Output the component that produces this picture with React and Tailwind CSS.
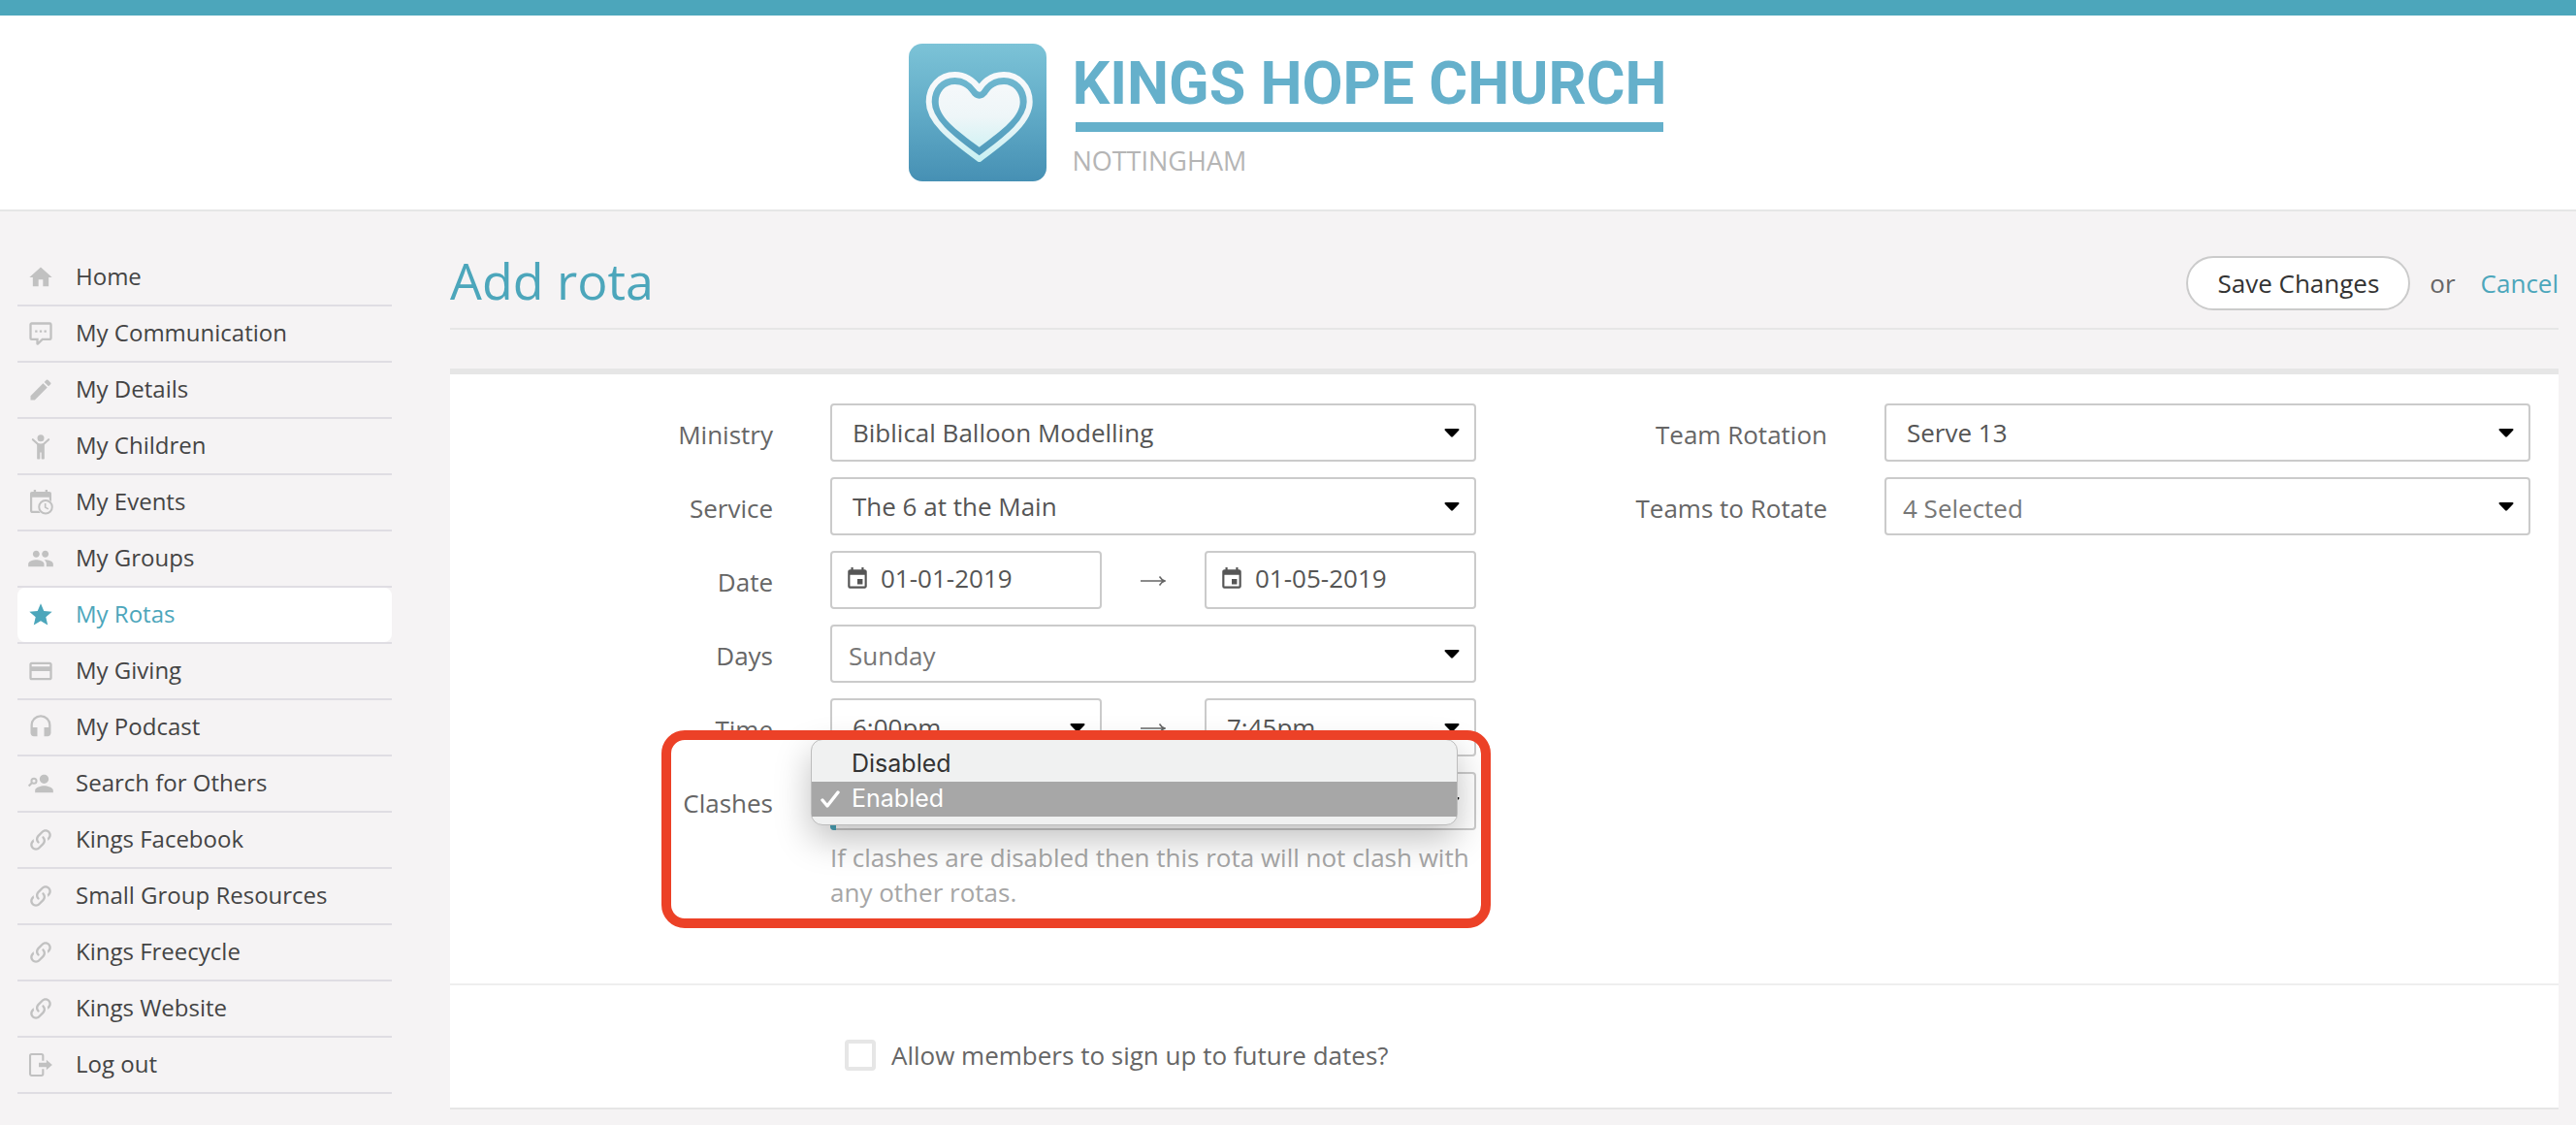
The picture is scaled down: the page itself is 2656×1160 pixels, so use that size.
import { MdHome, MdEdit, MdPeople, MdStar, MdCreditCard, MdHeadset, MdEvent } from 'react-icons/md';

function Glyph({ children }) {
  return (
    <svg viewBox="0 0 24 24" width="28" height="28" fill="currentColor" aria-hidden="true">
      {children}
    </svg>
  );
}

const CommentIcon = () => (
  <Glyph>
    <path d="M9,22A1,1 0 0,1 8,21V18H4A2,2 0 0,1 2,16V4C2,2.89 2.9,2 4,2H20A2,2 0 0,1 22,4V16A2,2 0 0,1 20,18H13.9L10.2,21.71C10,21.9 9.75,22 9.5,22H9M10,16V19.08L13.08,16H20V4H4V16H10M17,11H15V9H17V11M13,11H11V9H13V11M9,11H7V9H9V11Z" />
  </Glyph>
);

const ChildIcon = () => (
  <Glyph>
    <circle cx="12" cy="5" r="3" />
    <path d="M5 6.2l5 4.6M19 6.2l-5 4.6" stroke="currentColor" strokeWidth="1.8" strokeLinecap="round" />
    <path d="M8.7 9.2c2 .8 4.600 .8 6.600 0V23a.6 .6 0 0 1-.6 .6h-1.500a.6 .6 0 0 1-.6-.6v-5.500h-1.200V23a.6 .6 0 0 1-.6 .6H9.300a.6 .6 0 0 1-.6-.6z" />
  </Glyph>
);

const CalendarClockIcon = () => (
  <Glyph>
    <rect x="3.500" y="3.500" width="17" height="17" rx="1.500" fill="none" stroke="currentColor" strokeWidth="1.900" />
    <path d="M3 3h18v4.500H3zM5.800 .9h2v3h-2zM16 .9h2v3h-2z" />
    <circle cx="16.300" cy="16.100" r="7" className="text-[#f5f3f4]" />
    <circle cx="16.300" cy="16.100" r="5.800" fill="none" stroke="currentColor" strokeWidth="1.700" />
    <path d="M16 12.800v3.600l2.700 1.500" fill="none" stroke="currentColor" strokeWidth="1.400" />
  </Glyph>
);

const PersonSearchIcon = () => (
  <Glyph>
    <path d="M15 12c2.210 0 4-1.790 4-4s-1.790-4-4-4-4 1.790-4 4 1.790 4 4 4zm0 2c-2.670 0-8 1.340-8 4v2h16v-2c0-2.660-5.330-4-8-4z" />
    <circle cx="6" cy="9.600" r="2.200" fill="none" stroke="currentColor" strokeWidth="1.700" />
    <path d="M4.400 11.200l-3 3" stroke="currentColor" strokeWidth="1.900" />
  </Glyph>
);

const LinkIcon = () => (
  <Glyph>
    <path d="M10.59,13.41C11,13.8 11,14.44 10.59,14.83C10.2,15.22 9.56,15.22 9.17,14.83C7.22,12.88 7.22,9.71 9.17,7.76V7.76L12.71,4.22C14.66,2.27 17.83,2.27 19.78,4.22C21.73,6.17 21.73,9.34 19.78,11.29L18.29,12.78C18.3,11.96 18.17,11.14 17.89,10.36L18.36,9.88C19.54,8.71 19.54,6.81 18.36,5.64C17.19,4.46 15.29,4.46 14.12,5.64L10.59,9.17C9.41,10.34 9.41,12.24 10.59,13.41M13.41,9.17C13.8,8.78 14.44,8.78 14.83,9.17C16.78,11.12 16.78,14.29 14.83,16.24V16.24L11.29,19.78C9.34,21.73 6.17,21.73 4.22,19.78C2.27,17.83 2.27,14.66 4.22,12.71L5.71,11.22C5.7,12.04 5.83,12.86 6.11,13.65L5.64,14.12C4.46,15.29 4.46,17.19 5.64,18.36C6.81,19.54 8.71,19.54 9.88,18.36L13.41,14.83C14.59,13.66 14.59,11.76 13.41,10.59C13,10.2 13,9.56 13.41,9.17Z" />
  </Glyph>
);

const LogoutIcon = () => (
  <Glyph>
    <path d="M14 8.300V4a1.400 1.400 0 0 0-1.400-1.400H4A1.400 1.400 0 0 0 2.600 4v16A1.400 1.400 0 0 0 4 21.400h8.600A1.400 1.400 0 0 0 14 20v-4.300" fill="none" stroke="currentColor" strokeWidth="1.800" />
    <path d="M10.300 10.100H17V7.400L22.200 12 17 16.600v-2.700h-6.700z" />
  </Glyph>
);

const NAV = [
  ['Home', MdHome],
  ['My Communication', CommentIcon],
  ['My Details', MdEdit],
  ['My Children', ChildIcon],
  ['My Events', CalendarClockIcon],
  ['My Groups', MdPeople],
  ['My Rotas', MdStar],
  ['My Giving', MdCreditCard],
  ['My Podcast', MdHeadset],
  ['Search for Others', PersonSearchIcon],
  ['Kings Facebook', LinkIcon],
  ['Small Group Resources', LinkIcon],
  ['Kings Freecycle', LinkIcon],
  ['Kings Website', LinkIcon],
  ['Log out', LogoutIcon],
];

function Logo() {
  return (
    <svg viewBox="0 0 142 142" className="size-[142px] shrink-0" aria-hidden="true">
      <defs>
        <linearGradient id="tile" x1="0" y1="0" x2="0" y2="1">
          <stop offset="0" stopColor="#7cc3d7" />
          <stop offset="0.5" stopColor="#61abc7" />
          <stop offset="1" stopColor="#4690b4" />
        </linearGradient>
        <linearGradient id="heart" gradientUnits="userSpaceOnUse" x1="0" y1="29" x2="0" y2="122">
          <stop offset="0" stopColor="#f8f9fb" />
          <stop offset="0.5" stopColor="#eef6f8" />
          <stop offset="1" stopColor="#c6f0f2" />
        </linearGradient>
      </defs>
      <rect width="142" height="142" rx="14" fill="url(#tile)" />
      <path
        d="M72.700 46.500C66 37 57 32 47.500 32C32 32 20.700 44 20.700 60C20.700 79 41 96 72.700 119C104 96 124.700 79 124.700 60C124.700 44 113 32 98 32C88 32 79 37 72.700 46.500Z"
        fill="none"
        stroke="url(#heart)"
        strokeWidth="6"
        strokeLinejoin="round"
      />
      <path
        d="M64 51C60 45 54 42 47.500 42C37.500 42 30.700 50 30.700 60C30.700 75 47 88 72.700 106.700C98 88 114.700 75 114.700 60C114.700 50 107.500 42 98 42C91 42 85.500 45 81.500 51C77 58.500 68.500 58.500 64 51Z"
        fill="url(#heart)"
      />
    </svg>
  );
}

function Caret() {
  return (
    <svg viewBox="0 0 16 9" width="16" height="9" className="pointer-events-none absolute top-[26px] right-[17px]" aria-hidden="true">
      <path d="M1.500 0h13a1 1 0 0 1 .7 1.700L8.900 8.300a1.300 1.300 0 0 1-1.800 0L.8 1.700A1 1 0 0 1 1.500 0z" fill="#000" />
    </svg>
  );
}

const BOX = 'h-[60px] w-full rounded border-2 border-[#cbcbcb] bg-white text-[26px]';

function Select({ id, value, label }) {
  return (
    <div className="relative min-w-0 flex-1">
      <select id={id} aria-label={label} defaultValue={value} className={`${BOX} appearance-none pl-[21px] pr-12 text-[#555]`}>
        <option>{value}</option>
      </select>
      <Caret />
    </div>
  );
}

function MultiSelect({ id, value }) {
  return (
    <div className="relative min-w-0 flex-1">
      <button id={id} type="button" className={`${BOX} pt-1 pl-[17px] pr-12 text-left text-[#777]`}>
        {value}
      </button>
      <Caret />
    </div>
  );
}

function DateInput({ id, value, label }) {
  return (
    <div className="relative min-w-0 flex-1">
      <input id={id} type="text" aria-label={label} defaultValue={value} className={`${BOX} pb-1 pl-[50px] text-[#555]`} />
      <MdEvent className="pointer-events-none absolute top-4 left-[15px] size-[26px] text-[#555]" aria-hidden="true" />
    </div>
  );
}

function Arrow() {
  return (
    <div className="flex w-[106px] shrink-0 items-center justify-center pt-0.5">
      <svg viewBox="0 0 26 12" width="26" height="12" fill="none" stroke="#666" strokeWidth="1.500" aria-hidden="true">
        <path d="M0 6h24.500M19.500 1.500C21 4 22.500 5.300 25 6c-2.500 .7-4 2-5.500 4.500" />
      </svg>
    </div>
  );
}

function Row({ label, htmlFor, children }) {
  return (
    <div className="relative flex gap-[59px] pr-[29px]">
      <label htmlFor={htmlFor} className="flex h-[60px] w-[333px] shrink-0 items-center justify-end pt-1">
        {label}
      </label>
      <div className="flex min-w-0 flex-1">{children}</div>
    </div>
  );
}

function ClashesMenu() {
  return (
    <ul
      role="listbox"
      aria-label="Clashes options"
      className="absolute -top-[34px] -left-[20px] right-[19px] rounded-xl border border-[#bdbdbd] bg-[#f0f1f1] pt-1.5 pb-2 text-[25px] text-[#333] shadow-[0_14px_36px_rgba(0,0,0,0.25)]"
      style={{ fontFamily: 'Inter, sans-serif' }}
    >
      <li role="option" aria-selected="false" className="h-[37px] pl-[41px] leading-9">
        Disabled
      </li>
      <li role="option" aria-selected="true" className="flex h-9 bg-[#a7a7a7] leading-[34px] text-white">
        <span className="flex w-[41px] items-center pl-[9px]">
          <svg viewBox="0 0 20 18" width="20" height="18" fill="none" stroke="#fff" strokeWidth="3.400" strokeLinecap="round" strokeLinejoin="round" aria-hidden="true">
            <path d="M2 10l5 6L18 2" />
          </svg>
        </span>
        Enabled
      </li>
    </ul>
  );
}

export default function App() {
  return (
    <div className="min-h-screen bg-[#f5f3f4] text-[26px] text-[#666]" style={{ fontFamily: '"Open Sans", sans-serif' }}>
      <header className="flex justify-center border-t-16 border-b-2 border-t-[#4ca6bb] border-b-[#e6e6e6] bg-white pt-[29px] pb-[29px]">
        <div className="flex gap-[26px]">
          <Logo />
          <div className="pt-[11px]">
            <p className="text-[61px] leading-[60px] font-bold text-[#65b0cb]" style={{ fontFamily: 'Roboto, sans-serif' }}>
              KINGS HOPE CHURCH
            </p>
            <div className="mx-1 mt-2.5 h-2.5 bg-[#65b0cb]" />
            <p className="mt-3 text-[27px] leading-9 text-[#b5b5b5]">NOTTINGHAM</p>
          </div>
        </div>
      </header>

      <div className="flex gap-[60px] px-[18px]">
        <nav className="w-[386px] shrink-0 pt-10 text-[24px]">
          <ul>
            {NAV.map(([name, Icon]) => {
              const active = name === 'My Rotas';
              return (
                <li key={name} className="border-b-2 border-[#dfdde3]">
                  <a
                    href="#"
                    aria-current={active ? 'page' : undefined}
                    className={`flex h-14 items-center pl-[10px] ${active ? 'rounded-lg bg-white text-[#4ca6bb]' : 'text-[#444]'}`}
                  >
                    <span className={`w-[50px] [&>svg]:size-7 ${active ? 'text-[#4ca6bb]' : 'text-[#c1c1c1]'}`}>
                      <Icon aria-hidden="true" />
                    </span>
                    <span className="pb-0.5">{name}</span>
                  </a>
                </li>
              );
            })}
          </ul>
        </nav>

        <main className="min-w-0 flex-1">
          <div className="flex items-center border-b-2 border-[#e6e6e6] pt-[46px] pb-[18px]">
            <h1 className="flex-1 pb-1.5 text-[52px] leading-[50px] text-[#4ca6bb]">Add rota</h1>
            <button type="button" className="h-14 rounded-full border-2 border-[#cbcbcb] bg-white px-[30px] text-[#333]">
              Save Changes
            </button>
            <span className="mr-[26px] ml-5">or</span>
            <a href="#" className="text-[#4ca6bb]">
              Cancel
            </a>
          </div>

          <form className="mt-10 border-t-6 border-b-2 border-[#e6e6e6] bg-white">
            <div className="grid grid-cols-2 border-b-2 border-[#eee] pt-[30px] pb-[76px]">
              <div className="flex flex-col gap-4">
                <Row label="Ministry" htmlFor="ministry">
                  <Select id="ministry" value="Biblical Balloon Modelling" />
                </Row>
                <Row label="Service" htmlFor="service">
                  <Select id="service" value="The 6 at the Main" />
                </Row>
                <Row label="Date" htmlFor="date-from">
                  <DateInput id="date-from" value="01-01-2019" />
                  <Arrow />
                  <DateInput id="date-to" value="01-05-2019" label="End date" />
                </Row>
                <Row label="Days" htmlFor="days">
                  <MultiSelect id="days" value="Sunday" />
                </Row>
                <Row label="Time" htmlFor="time-from">
                  <Select id="time-from" value="6:00pm" />
                  <Arrow />
                  <Select id="time-to" value="7:45pm" label="End time" />
                </Row>
                <Row label="Clashes" htmlFor="clashes">
                  <div className="min-w-0 flex-1">
                    <div className="relative">
                      <select id="clashes" defaultValue="" className={`${BOX} block appearance-none`}>
                        <option value=""></option>
                        <option value="disabled">Disabled</option>
                        <option value="enabled">Enabled</option>
                      </select>
                      <Caret />
                      <span className="absolute inset-y-0 left-0 w-1.5 rounded-l bg-[#4ca6bb]" />
                      <ClashesMenu />
                    </div>
                    <p className="mt-2.5 leading-9 text-[#a6a6a6]">
                      If clashes are disabled then this rota will not clash with any other rotas.
                    </p>
                  </div>
                  <div className="pointer-events-none absolute -top-[43px] right-[14px] -bottom-[19px] left-[218px] rounded-3xl border-10 border-[#ec4127]" />
                </Row>
              </div>
              <div className="flex flex-col gap-4">
                <Row label="Team Rotation" htmlFor="rotation">
                  <Select id="rotation" value="Serve 13" />
                </Row>
                <Row label="Teams to Rotate" htmlFor="teams">
                  <MultiSelect id="teams" value="4 Selected" />
                </Row>
              </div>
            </div>
            <div className="flex items-center gap-4 pt-[54px] pb-9 pl-[407px]">
              <input id="signup" type="checkbox" className="size-8 appearance-none rounded border-4 border-[#e6e6e6] bg-white" />
              <label htmlFor="signup" className="leading-9">
                Allow members to sign up to future dates?
              </label>
            </div>
          </form>
        </main>
      </div>
    </div>
  );
}
